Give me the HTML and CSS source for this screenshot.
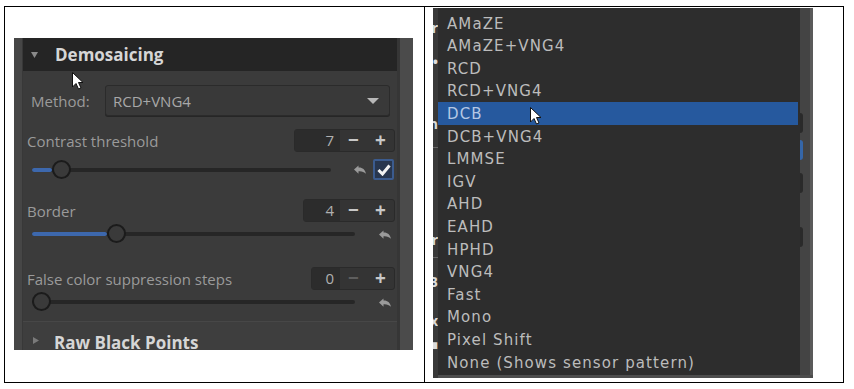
FILE: index.html
```html
<!DOCTYPE html>
<html lang="en">

<head>
    <meta charset="UTF-8">
    <meta name="viewport" content="width=device-width, initial-scale=1.0">
    <title>Demosaicing methods</title>
    <link rel="stylesheet" href="styles.css">
</head>

<body>
    <div class="doc">
        <div class="cell cell-left">
            <div class="shot shot-panel">
                <div class="frame-l"></div>
                <div class="pane">
                    <div class="head">
                        <svg class="tri" width="7" height="6" viewBox="0 0 7 6"><polygon points="0,0 7,0 3.5,6" fill="#8a8a8a"/></svg>
                        Demosaicing
                    </div>

                    <div class="row row-method">
                        <span class="lbl">Method:</span>
                        <div class="combo">
                            <span>RCD+VNG4</span>
                            <svg width="12" height="6" viewBox="0 0 12 6"><polygon points="0,0 12,0 6,6" fill="#b8b8b8"/></svg>
                        </div>
                    </div>

                    <div class="row row-spin">
                        <span class="lbl">Contrast threshold</span>
                        <div class="spin">
                            <span class="val">7</span>
                            <span class="btn">&minus;</span>
                            <span class="btn">+</span>
                        </div>
                    </div>
                    <div class="row row-slider with-check">
                        <div class="track">
                            <div class="fill" style="width:20px"></div>
                            <div class="knob" style="left:20px"></div>
                        </div>
                        <svg class="reset" width="12" height="9" viewBox="0 0 12 9"><path d="M0 4.5 L4.5 0.5 L4.5 2.6 C8.5 2.4 11 4.6 12 8.8 C10 6.8 7.5 6 4.5 6.3 L4.5 8.8 Z" fill="#9a9a9a"/></svg>
                        <span class="check">
                            <svg width="14" height="12" viewBox="0 0 14 12"><path d="M1.5 6 L5.5 10 L12.5 1.5" stroke="#f2f2f2" stroke-width="3" fill="none"/></svg>
                        </span>
                    </div>

                    <div class="row row-spin">
                        <span class="lbl">Border</span>
                        <div class="spin">
                            <span class="val val-m">4</span>
                            <span class="btn">&minus;</span>
                            <span class="btn">+</span>
                        </div>
                    </div>
                    <div class="row row-slider">
                        <div class="track">
                            <div class="fill" style="width:75px"></div>
                            <div class="knob" style="left:75px"></div>
                        </div>
                        <svg class="reset" width="12" height="9" viewBox="0 0 12 9"><path d="M0 4.5 L4.5 0.5 L4.5 2.6 C8.5 2.4 11 4.6 12 8.8 C10 6.8 7.5 6 4.5 6.3 L4.5 8.8 Z" fill="#9a9a9a"/></svg>
                    </div>

                    <div class="row row-spin wide-gap">
                        <span class="lbl">False color suppression steps</span>
                        <div class="spin">
                            <span class="val val-s">0</span>
                            <span class="btn off">&minus;</span>
                            <span class="btn">+</span>
                        </div>
                    </div>
                    <div class="row row-slider">
                        <div class="track">
                            <div class="fill" style="width:0"></div>
                            <div class="knob" style="left:0"></div>
                        </div>
                        <svg class="reset" width="12" height="9" viewBox="0 0 12 9"><path d="M0 4.5 L4.5 0.5 L4.5 2.6 C8.5 2.4 11 4.6 12 8.8 C10 6.8 7.5 6 4.5 6.3 L4.5 8.8 Z" fill="#9a9a9a"/></svg>
                    </div>

                    <div class="sub-head">
                        <svg class="tri-r" width="6" height="7" viewBox="0 0 6 7"><polygon points="0,0 6,3.5 0,7" fill="#7a7a7a"/></svg>
                        Raw Black Points
                    </div>
                </div>
                <div class="frame-r"></div>

                <svg class="cursor cursor-panel" width="12" height="18" viewBox="0 0 12 18"><path d="M0.5 0.5 V15 L4 11.5 L6.5 17 L9 16 L6.5 10.5 H11 Z" fill="#fff" stroke="#111" stroke-width="1"/></svg>
            </div>
        </div>

        <div class="cell cell-right">
            <div class="shot shot-menu">
                <div class="peek-l">
                    <span class="bit" style="top:12px">r</span>
                    <span class="bit" style="top:46px">•</span>
                    <span class="bit" style="top:108px">n</span>
                    <span class="rule" style="top:139px"></span>
                    <span class="bit" style="top:224px">r</span>
                    <span class="rule" style="top:249px"></span>
                    <span class="bit" style="top:266px">B</span>
                    <span class="bit" style="top:305px">x</span>
                    <span class="bit" style="top:329px">■</span>
                </div>
                <ul class="menu">
                    <li>AMaZE</li>
                    <li>AMaZE+VNG4</li>
                    <li>RCD</li>
                    <li>RCD+VNG4</li>
                    <li class="on">DCB</li>
                    <li>DCB+VNG4</li>
                    <li>LMMSE</li>
                    <li>IGV</li>
                    <li>AHD</li>
                    <li>EAHD</li>
                    <li>HPHD</li>
                    <li>VNG4</li>
                    <li>Fast</li>
                    <li>Mono</li>
                    <li>Pixel Shift</li>
                    <li>None (Shows sensor pattern)</li>
                </ul>
                <div class="peek-r">
                    <span class="nub" style="top:105px"></span>
                    <span class="nub blue" style="top:132px"></span>
                    <span class="nub" style="top:165px"></span>
                    <span class="nub" style="top:219px"></span>
                </div>

                <svg class="cursor cursor-menu" width="14" height="18" viewBox="0 0 12 18"><path d="M0.5 0.5 V15 L4 11.5 L6.5 17 L9 16 L6.5 10.5 H11 Z" fill="#fff" stroke="#111" stroke-width="1"/></svg>
            </div>
        </div>
    </div>
</body>

</html>
```

FILE: styles.css
```css
* {
    margin: 0;
    padding: 0;
    box-sizing: border-box;
}

body {
    margin: 6px 0 0 4px;
    background-color: #fff;
    font-family: "Open Sans", "Liberation Sans", sans-serif;
}

/* document table */
.doc {
    display: grid;
    grid-template-columns: 420px 418px;
    width: 840px;
    height: 377px;
    border: 1px solid #000;
}

.cell-left {
    border-right: 1px solid #000;
    padding: 31px 0 0 9px;
}

.cell-right {
    padding: 1px 0 0 8px;
}

.shot {
    position: relative;
    overflow: hidden;
}

/* left screenshot: tool panel */
.shot-panel {
    display: flex;
    width: 399px;
    height: 312px;
    background-color: #464646;
}

.frame-l {
    width: 9px;
    border-right: 1px solid #383838;
}

.pane {
    width: 374px;
    display: flex;
    flex-direction: column;
    background-color: #3b3b3b;
}

.frame-r {
    width: 16px;
    background-color: #4b4b4b;
    border-left: 3px solid #363636;
}

.head {
    flex: none;
    height: 33px;
    display: flex;
    align-items: center;
    background-color: #252525;
    color: #d6d6d6;
    font-weight: 700;
    font-size: 17px;
}

.head .tri {
    margin: 0 17px 0 8px;
}

.row {
    flex: none;
    display: flex;
    align-items: center;
}

.lbl {
    color: #9a9a9a;
    font-size: 15px;
}

.row-method {
    height: 31px;
    margin-top: 14px;
    padding-left: 8px;
}

.row-method .lbl {
    width: 74px;
}

.combo {
    width: 285px;
    height: 31px;
    display: flex;
    align-items: center;
    justify-content: space-between;
    padding: 0 10px 0 7px;
    background-color: #393939;
    border: 1px solid #2b2b2b;
    border-radius: 3px;
    box-shadow: 0 1px 0 #262626;
    color: #a8a8a8;
    font-size: 15px;
}

.row-spin {
    height: 23px;
    margin-top: 18px;
    justify-content: space-between;
    padding: 0 2px 0 4px;
}

.row-method + .row-spin {
    margin-top: 13px;
}

.row-spin.wide-gap {
    margin-top: 22px;
}

.spin {
    display: flex;
    height: 23px;
    background-color: #343434;
    border: 1px solid #2a2a2a;
    border-radius: 3px;
    color: #c8c8c8;
}

.spin .val {
    width: 45px;
    padding-right: 6px;
    background-color: #2c2c2c;
    text-align: right;
    font-size: 15px;
    line-height: 21px;
    color: #b0b0b0;
}

.spin .val-m {
    width: 36px;
}

.spin .val-s {
    width: 28px;
}

.spin .btn {
    width: 27px;
    text-align: center;
    font-size: 19px;
    font-weight: 700;
    line-height: 20px;
}

.spin .btn.off {
    color: #5e5e5e;
}

.row-slider {
    height: 22px;
    margin-top: 1px;
    padding-left: 9px;
}

.row-slider.with-check {
    height: 23px;
    margin-top: 6px;
}

.track {
    position: relative;
    width: 323px;
    height: 4px;
    background-color: #262626;
    border-radius: 2px;
}

.with-check .track {
    width: 299px;
}

.fill {
    height: 4px;
    background-color: #3d68ad;
    border-radius: 2px;
}

.knob {
    position: absolute;
    top: -8px;
    width: 19px;
    height: 19px;
    border-radius: 50%;
    background-color: #3a3a3a;
    border: 2px solid #1b1b1b;
}

.reset {
    margin-left: 24px;
}

.with-check .reset {
    margin-left: 23px;
}

.check {
    display: flex;
    align-items: center;
    justify-content: center;
    width: 21px;
    height: 21px;
    margin-left: 7px;
    background-color: #28364e;
    border: 2px solid #3b5b8e;
    border-radius: 2px;
}

.sub-head {
    flex: 1;
    display: flex;
    align-items: flex-start;
    margin-top: 8px;
    padding-top: 9px;
    border-top: 1px solid #474747;
    background-color: #3e3e3e;
    color: #d6d6d6;
    font-weight: 700;
    font-size: 17px;
}

.sub-head .tri-r {
    margin: 6px 15px 0 10px;
}

.cursor {
    position: absolute;
}

.cursor-panel {
    left: 58px;
    top: 34px;
}

/* right screenshot: open drop-down */
.shot-menu {
    display: flex;
    width: 380px;
    height: 370px;
    background-color: #4d4d4d;
}

.peek-l {
    position: relative;
    width: 5px;
    background-color: #393939;
    overflow: hidden;
}

.peek-l .bit {
    position: absolute;
    right: 0;
    color: #dcdcdc;
    font-weight: 700;
    font-size: 14px;
    line-height: 16px;
}

.peek-l .rule {
    position: absolute;
    left: 0;
    width: 5px;
    height: 1px;
    background-color: #666;
}

.menu {
    list-style: none;
    width: 362px;
    height: 367px;
    padding-top: 3.6px;
    background-color: #2d2d2d;
    font-family: "DejaVu Sans", "Liberation Sans", sans-serif;
    font-size: 15px;
    letter-spacing: 1.1px;
    color: #bcbcbc;
}

.menu li {
    height: 22.6px;
    line-height: 24.6px;
    padding-left: 9px;
    margin-right: 2px;
    white-space: nowrap;
}

.menu li.on {
    background-color: #26599e;
    color: #b4c7e4;
}

.peek-r {
    position: relative;
    flex: 1;
    height: 367px;
    background-color: #444;
    border-right: 3px solid #5a5a5a;
}

.peek-r .nub {
    position: absolute;
    left: 0;
    width: 3px;
    height: 20px;
    border-radius: 0 3px 3px 0;
    background-color: #2a2a2a;
}

.peek-r .nub.blue {
    background-color: #3566a8;
}

.cursor-menu {
    left: 96px;
    top: 99px;
}
```
